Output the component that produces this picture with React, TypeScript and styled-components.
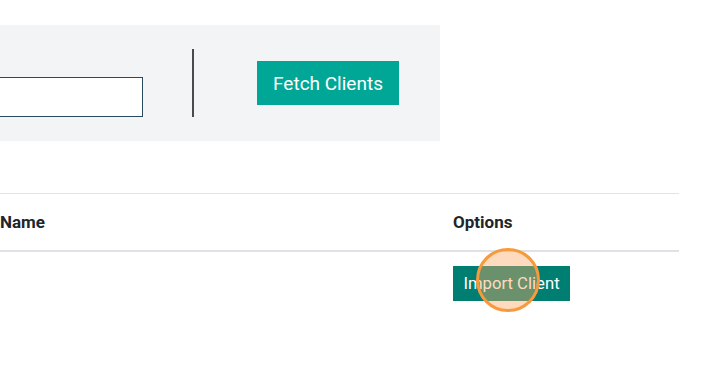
import React from "react";
import styled, { createGlobalStyle } from "styled-components";

const Global = createGlobalStyle`
  html, body { margin: 0; padding: 0; background: #ffffff; }
  body { font-family: Roboto, "Noto Sans", Arial, sans-serif; color: #212529; overflow: hidden; }
  * { box-sizing: border-box; }
`;

const Page = styled.div`
  width: 712px;
  height: 387px;
  padding-top: 25px;
  display: flex;
  flex-direction: column;
`;

const Toolbar = styled.div`
  width: 440px;
  height: 116px;
  background: #f3f4f6;
  display: flex;
  align-items: center;
`;

const FieldGroup = styled.div`
  height: 68px;
  display: flex;
  flex-direction: column;
  justify-content: flex-end;
  margin-left: -20px;
`;

const SearchInput = styled.input`
  width: 163px;
  height: 40px;
  border: 1px solid #29495e;
  background: #ffffff;
  outline: none;
  padding: 0 8px;
  font: inherit;
`;

const Divider = styled.div`
  width: 2px;
  height: 68px;
  background: #4a4a4a;
  margin-left: 49px;
`;

const Button = styled.button<{ $hover?: boolean; $size: "lg" | "md" }>`
  border: none;
  color: #ffffff;
  font-family: Roboto, Arial, sans-serif;
  cursor: pointer;
  white-space: nowrap;
  background: ${(p) => (p.$hover ? "#017e72" : "#00a796")};
  font-size: ${(p) => (p.$size === "lg" ? "19px" : "16.7px")};
  height: ${(p) => (p.$size === "lg" ? "44px" : "35px")};
  width: ${(p) => (p.$size === "lg" ? "142px" : "117px")};
  padding: 0;
`;

const FetchWrap = styled.div`
  margin-left: 63px;
  display: flex;
`;

const Table = styled.table`
  width: 679px;
  margin-top: 52px;
  border-collapse: collapse;
`;

const HeadCell = styled.th`
  text-align: left;
  font-size: 17px;
  font-weight: 700;
  color: #212529;
  height: 57px;
  padding: 0;
  border-top: 1px solid #e1e3e6;
  border-bottom: 2px solid #dfe1e5;
  vertical-align: middle;
`;

const BodyCell = styled.td`
  padding: 14px 0 0 0;
  vertical-align: top;
  height: 60px;
`;

const ClickMarkWrap = styled.div`
  position: relative;
  display: inline-block;
`;

const ClickMark = styled.span`
  position: absolute;
  left: 23px;
  top: -18px;
  width: 64px;
  height: 64px;
  border-radius: 50%;
  border: 3px solid #f79a3e;
  background: rgba(252, 170, 100, 0.42);
  pointer-events: none;
`;

export default function App() {
  return (
    <>
      <Global />
      <Page>
        <Toolbar>
          <FieldGroup>
            <SearchInput type="text" />
          </FieldGroup>
          <Divider />
          <FetchWrap>
            <Button $size="lg">Fetch Clients</Button>
          </FetchWrap>
        </Toolbar>
        <Table>
          <thead>
            <tr>
              <HeadCell style={{ width: 453 }}>Name</HeadCell>
              <HeadCell>Options</HeadCell>
            </tr>
          </thead>
          <tbody>
            <tr>
              <BodyCell />
              <BodyCell>
                <ClickMarkWrap>
                  <Button $size="md" $hover>
                    Import Client
                  </Button>
                  <ClickMark />
                </ClickMarkWrap>
              </BodyCell>
            </tr>
          </tbody>
        </Table>
      </Page>
    </>
  );
}
